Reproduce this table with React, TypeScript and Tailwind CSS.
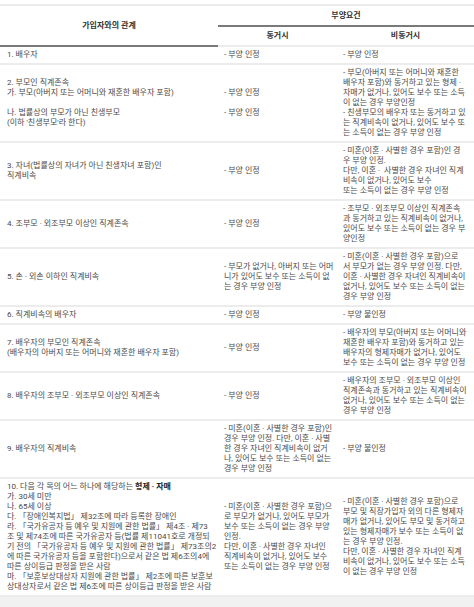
import type { ReactNode } from "react"

type Cell = (string | ReactNode)[]

type Row = {
  who: Cell
  together: Cell
  apart: Cell
}

const rows: Row[] = [
  { who: ["1. 배우자"], together: ["- 부양 인정"], apart: ["- 부양 인정"] },
  {
    who: [
      "2. 부모인 직계존속",
      "가. 부모(아버지 또는 어머니와 재혼한 배우자 포함)",
      "",
      "나. 법률상의 부모가 아닌 친생부모",
      "(이하 '친생부모'라 한다)",
    ],
    together: ["- 부양 인정", "", "- 부양 인정"],
    apart: [
      "- 부모(아버지 또는 어머니와 재혼한",
      "배우자 포함)와 동거하고 있는 형제 ·",
      "자매가 없거나, 있어도 보수 또는 소득",
      "이 없는 경우 부양인정",
      "- 친생부모의 배우자 또는 동거하고 있",
      "는 직계비속이 없거나, 있어도 보수 또",
      "는 소득이 없는 경우 부양 인정",
    ],
  },
  {
    who: ["3. 자녀(법률상의 자녀가 아닌 친생자녀 포함)인", "직계비속"],
    together: ["- 부양 인정"],
    apart: [
      "- 미혼(이혼 · 사별한 경우 포함)인 경",
      "우 부양 인정.",
      "다만, 이혼 ·  사별한 경우 자녀인 직계",
      "비속이 없거나, 있어도 보수",
      "또는 소득이 없는 경우 부양 인정",
    ],
  },
  {
    who: ["4. 조부모 · 외조부모 이상인 직계존속"],
    together: ["- 부양 인정"],
    apart: [
      "- 조부모 · 외조부모 이상인 직계존속",
      "과 동거하고 있는 직계비속이 없거나,",
      "있어도 보수 또는 소득이 없는 경우 부",
      "양인정",
    ],
  },
  {
    who: ["5. 손 · 외손 이하인 직계비속"],
    together: [
      "- 부모가 없거나, 아버지 또는 어머",
      "니가 있어도 보수 또는 소득이 없",
      "는 경우 부양 인정",
    ],
    apart: [
      "- 미혼(이혼 · 사별한 경우 포함)으로",
      "서 부모가 없는 경우 부양 인정. 다만,",
      "이혼 · 사별한 경우 자녀인 직계비속이",
      "없거나, 있어도 보수 또는 소득이 없는",
      "경우 부양 인정",
    ],
  },
  { who: ["6. 직계비속의 배우자"], together: ["- 부양 인정"], apart: ["- 부양 불인정"] },
  {
    who: ["7. 배우자의 부모인 직계존속", "(배우자의 아버지 또는 어머니와 재혼한 배우자 포함)"],
    together: ["- 부양 인정"],
    apart: [
      "- 배우자의 부모(아버지 또는 어머니와",
      "재혼한 배우자 포함)와 동거하고 있는",
      "배우자의 형제자매가 없거나, 있어도",
      "보수 또는 소득이 없는 경우 부양 인정",
    ],
  },
  {
    who: ["8. 배우자의 조부모 · 외조부모 이상인 직계존속"],
    together: ["- 부양 인정"],
    apart: [
      "- 배우자의 조부모 · 외조부모 이상인",
      "직계존속과 동거하고 있는 직계비속이",
      "없거나, 있어도 보수 또는 소득이 없는",
      "경우 부양 인정",
    ],
  },
  {
    who: ["9. 배우자의 직계비속"],
    together: [
      "- 미혼(이혼 · 사별한 경우 포함)인",
      "경우 부양 인정. 다만, 이혼 · 사별",
      "한 경우 자녀인 직계비속이 없거",
      "나, 있어도 보수 또는 소득이 없는",
      "경우 부양 인정",
    ],
    apart: ["- 부양 불인정"],
  },
  {
    who: [
      <>
        10. 다음 각 목의 어느 하나에 해당하는 <b className="font-bold text-[#222]">형제 · 자매</b>
      </>,
      "가. 30세 미만",
      "나. 65세 이상",
      "다. 「장애인복지법」 제32조에 따라 등록한 장애인",
      "라. 「국가유공자 등 예우 및 지원에 관한 법률」 제4조 · 제73",
      "조 및 제74조에 따른 국가유공자 등(법률 제11041호로 개정되",
      "기 전의 「국가유공자 등 예우 및 지원에 관한 법률」 제73조의2",
      "에 따른 국가유공자 등을 포함한다)으로서 같은 법 제6조의4에",
      "따른 상이등급 판정을 받은 사람",
      "마. 「보훈보상대상자 지원에 관한 법률」 제2조에 따른 보훈보",
      "상대상자로서 같은 법 제6조에 따른 상이등급 판정을 받은 사람",
    ],
    together: [
      "- 미혼(이혼 · 사별한 경우 포함)으",
      "로 부모가 없거나, 있어도 부모가",
      "보수 또는 소득이 없는 경우 부양",
      "인정.",
      "다만, 이혼 · 사별한 경우 자녀인",
      "직계비속이 없거나, 있어도 보수",
      "또는 소득이 없는 경우 부양 인정",
    ],
    apart: [
      "- 미혼(이혼 · 사별한 경우 포함)으로",
      "부모 및 직장가입자 외의 다른 형제자",
      "매가 없거나, 있어도 부모 및 동거하고",
      "있는 형제자매가 보수 또는 소득이 없",
      "는 경우 부양 인정.",
      "다만, 이혼 · 사별한 경우 자녀인 직계",
      "비속이 없거나, 있어도 보수 또는 소득",
      "이 없는 경우 부양 인정",
    ],
  },
]

function Lines({ lines, className = "" }: { lines: Cell; className?: string }) {
  return (
    <div className={`self-center overflow-hidden py-[3px] ${className}`}>
      {lines.map((line, i) => (
        <div key={i} className="whitespace-pre">
          {line === "" ? "\u00a0" : line}
        </div>
      ))}
    </div>
  )
}

export default function App() {
  return (
    <div className="min-h-[607px] bg-[#f1f1f1] font-['Roboto','Noto_Sans_CJK_KR',sans-serif] text-[8px] leading-[10px] text-[#4a4a4a]">
      <div className="bg-white pt-[4px]">
        {/* header */}
        <div className="grid grid-cols-[218px_119px_1fr] border-t-2 border-[#ececec] font-bold text-[#333]">
          <div className="row-span-2 flex items-center justify-center border-b-2 border-[#7a7a7a]">
            가입자와의 관계
          </div>
          <div className="col-span-2 flex h-[21px] items-center justify-center border-b-2 border-[#7a7a7a]">
            부양요건
          </div>
          <div className="flex h-[20px] items-center justify-center border-b-2 border-[#ececec]">
            동거시
          </div>
          <div className="flex h-[20px] items-center justify-center border-b-2 border-[#ececec]">
            비동거시
          </div>
        </div>

        {rows.map((row, i) => (
          <div
            key={i}
            className="grid grid-cols-[218px_119px_1fr] border-b-2 border-[#ececec]"
          >
            <Lines lines={row.who} className="px-[7px]" />
            <Lines lines={row.together} className="px-[6px]" />
            <Lines lines={row.apart} className="px-[6px]" />
          </div>
        ))}
      </div>
    </div>
  )
}
